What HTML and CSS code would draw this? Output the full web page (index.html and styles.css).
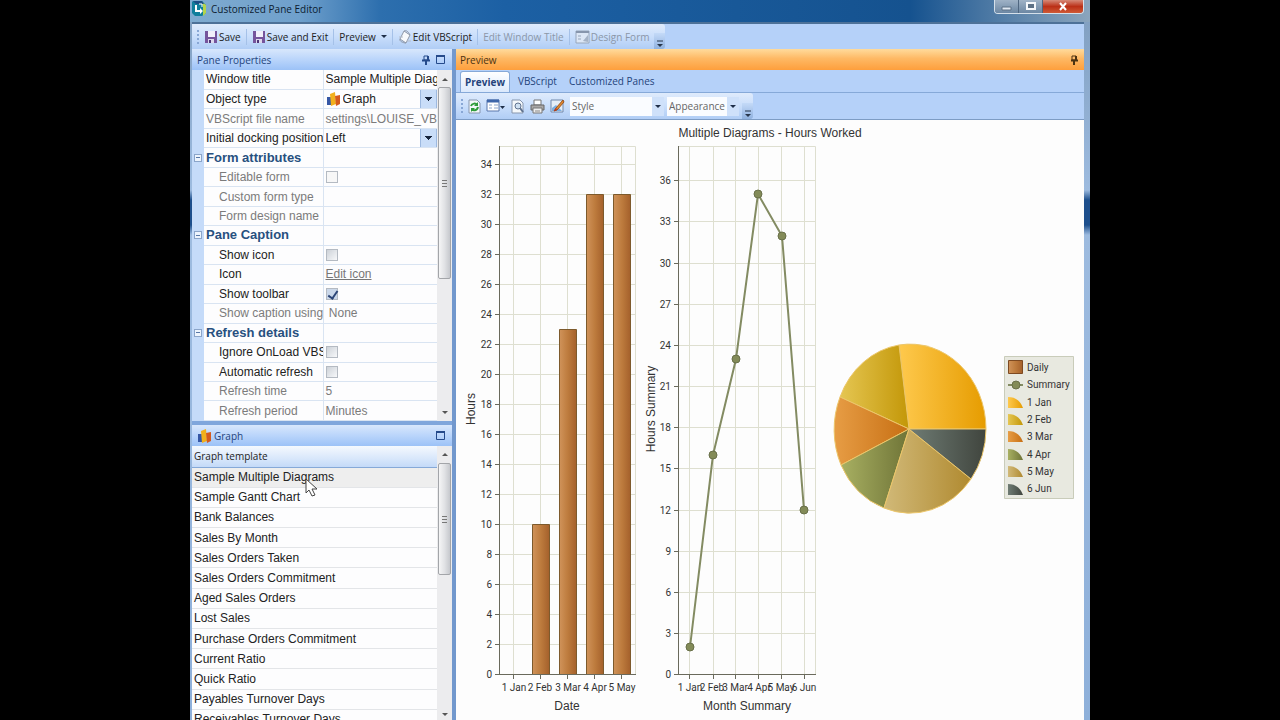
FILE: index.html
```html
<!DOCTYPE html>
<html lang="en">
<head>
    <meta charset="UTF-8">
    <meta name="viewport" content="width=device-width, initial-scale=1.0">
    <title>Customized Pane Editor</title>
    <link rel="stylesheet" href="styles.css">
</head>
<body>
<div class="window">
    <header class="titlebar">
        <svg class="app-icon" width="14" height="15" viewBox="0 0 14 15">
            <path d="M1 0h9l4 4v8l-4 3H3l-3-3V1z" fill="#0f7f9c"/>
            <path d="M9 0l5 4v8l-3 3V5z" fill="#b5d44a"/>
            <path d="M1 0h9l2 3H4z" fill="#1b4f86"/>
            <path d="M3 4h2v5h3V7l3 3-3 3v-2H3z" fill="#fff"/>
            <path d="M7 3h3v3" stroke="#fff" fill="none"/>
        </svg>
        <h1>Customized Pane Editor</h1>
        <div class="window-buttons">
            <button aria-label="Minimize"><svg width="12" height="10" viewBox="0 0 12 10"><path d="M1 5h9v3H1z" fill="#dfe8f2" stroke="#5d7186"/></svg></button>
            <button aria-label="Maximize"><svg width="12" height="10" viewBox="0 0 12 10"><path d="M2 1h8v6H2z" fill="#5d7186" stroke="#f4f7fb" stroke-width="2"/></svg></button>
            <button class="close" aria-label="Close"><svg width="12" height="10" viewBox="0 0 12 10"><path d="M3 1l6 7M9 1L3 8" stroke="#fff" stroke-width="2"/></svg></button>
        </div>
    </header>

    <div class="client">
        <div class="main-toolbar">
            <div class="strip">
                <span class="grip"></span>
                <button><svg width="14" height="14" viewBox="0 0 14 14"><path d="M1 1h12v12H1z" fill="#75549c"/><path d="M4 1h7v6H4z" fill="#f1effa"/><path d="M4 9h6v4H4z" fill="#ddd8ec"/><path d="M5 10h2v3H5z" fill="#4d3477"/></svg>Save</button>
                <span class="sep"></span>
                <button><svg width="14" height="14" viewBox="0 0 14 14"><path d="M1 1h12v12H1z" fill="#75549c"/><path d="M4 1h7v6H4z" fill="#f1effa"/><path d="M4 9h6v4H4z" fill="#ddd8ec"/><path d="M5 10h2v3H5z" fill="#4d3477"/></svg>Save and Exit</button>
                <span class="sep"></span>
                <button class="menu">Preview<span class="caret"></span></button>
                <span class="sep"></span>
                <button><svg width="14" height="14" viewBox="0 0 14 14"><path d="M6 1l6 4-4 8-6-4z" fill="#f7f9fc" stroke="#8d97a8"/><path d="M6 1c2-1 4 0 6 4M2 9c-1 2 3 4 6 4" fill="none" stroke="#8d97a8"/><path d="M1 7h4M9 11h4" stroke="#b6becb"/></svg>Edit VBScript</button>
                <span class="sep"></span>
                <button disabled>Edit Window Title</button>
                <span class="sep"></span>
                <button disabled><svg width="15" height="14" viewBox="0 0 15 14"><path d="M1 1h13v12H1z" fill="#dce7f6" stroke="#97a6bb"/><path d="M1 2h13" stroke="#8796ad" stroke-width="2"/><path d="M3 6h3M3 9h3" stroke="#97a6bb"/><path d="M13 5l-5 6 5 1z" fill="#a5b3c7"/></svg>Design Form</button>
                <button class="more" aria-label="Toolbar options"><svg width="7" height="8" viewBox="0 0 7 8"><path d="M1 1h6" stroke="#27364d"/><path d="M1 4h6L4 7z" fill="#27364d"/></svg></button>
            </div>
        </div>

        <div class="columns">
            <aside class="side">
                <section class="pane properties">
                    <h2 class="pane-head">Pane Properties
                        <span class="head-icons">
                            <svg width="9" height="10" viewBox="0 0 9 10"><path d="M2 1h4v4H2z" fill="none" stroke="#254a8b"/><path d="M6 1v4M0 5.500h8M4 6v4" fill="none" stroke="#254a8b" stroke-width="2"/></svg>
                            <svg width="9" height="9" viewBox="0 0 9 9"><path d="M.5.5h8v8h-8z" fill="none" stroke="#254a8b"/><path d="M0 1h9" stroke="#254a8b" stroke-width="2"/></svg>
                        </span>
                    </h2>
                    <div class="pane-body">
                        <table class="props">
                            <tr><td class="gutter"></td><th><label for="p-title">Window title</label></th><td><input class="text" id="p-title" type="text" value="Sample Multiple Diagrams"></td></tr>
                            <tr><td class="gutter"></td><th><label for="p-type">Object type</label></th><td>
                                <span class="drop"><svg width="15" height="14" viewBox="0 0 15 14"><path d="M1 5h4v8H1z" fill="#3657a5"/><path d="M4 2l5-2 1 12-5 2z" fill="#f2b01c"/><path d="M9 4l5-1v9l-4 2z" fill="#d55a1c"/></svg><select id="p-type"><option>Graph</option></select></span></td></tr>
                            <tr class="off"><td class="gutter"></td><th>VBScript file name</th><td>settings\LOUISE_VBScript</td></tr>
                            <tr><td class="gutter"></td><th><label for="p-dock">Initial docking position</label></th><td><span class="drop"><select id="p-dock"><option>Left</option></select></span></td></tr>
                            <tr class="group"><td class="gutter"><button class="fold" aria-label="Collapse Form attributes"></button></td><th>Form attributes</th><td></td></tr>
                            <tr class="sub off"><td class="gutter"></td><th><label for="p-edit">Editable form</label></th><td><input id="p-edit" type="checkbox" disabled></td></tr>
                            <tr class="sub off"><td class="gutter"></td><th>Custom form type</th><td></td></tr>
                            <tr class="sub off"><td class="gutter"></td><th>Form design name</th><td></td></tr>
                            <tr class="group"><td class="gutter"><button class="fold" aria-label="Collapse Pane Caption"></button></td><th>Pane Caption</th><td></td></tr>
                            <tr class="sub"><td class="gutter"></td><th><label for="p-icon">Show icon</label></th><td><input id="p-icon" type="checkbox"></td></tr>
                            <tr class="sub"><td class="gutter"></td><th>Icon</th><td><a href="#">Edit icon</a></td></tr>
                            <tr class="sub"><td class="gutter"></td><th><label for="p-bar">Show toolbar</label></th><td><input id="p-bar" type="checkbox" checked></td></tr>
                            <tr class="sub off"><td class="gutter"></td><th>Show caption using</th><td>&nbsp;None</td></tr>
                            <tr class="group"><td class="gutter"><button class="fold" aria-label="Collapse Refresh details"></button></td><th>Refresh details</th><td></td></tr>
                            <tr class="sub"><td class="gutter"></td><th><label for="p-load">Ignore OnLoad VBScript</label></th><td><input id="p-load" type="checkbox"></td></tr>
                            <tr class="sub"><td class="gutter"></td><th><label for="p-auto">Automatic refresh</label></th><td><input id="p-auto" type="checkbox"></td></tr>
                            <tr class="sub off"><td class="gutter"></td><th>Refresh time</th><td>5</td></tr>
                            <tr class="sub off"><td class="gutter"></td><th>Refresh period</th><td>Minutes</td></tr>
                        </table>
                        <div class="scroll"><span class="up"></span><span class="thumb"></span><span class="down"></span></div>
                    </div>
                </section>

                <section class="pane graphs">
                    <h2 class="pane-head"><svg width="15" height="14" viewBox="0 0 15 14"><path d="M1 5h4v8H1z" fill="#3657a5"/><path d="M4 2l5-2 1 12-5 2z" fill="#f2b01c"/><path d="M9 4l5-1v9l-4 2z" fill="#d55a1c"/></svg>Graph
                        <span class="head-icons">
                            <svg width="9" height="9" viewBox="0 0 9 9"><path d="M.5.5h8v8h-8z" fill="none" stroke="#254a8b"/><path d="M0 1h9" stroke="#254a8b" stroke-width="2"/></svg>
                        </span>
                    </h2>
                    <div class="pane-body">
                        <div class="list-wrap">
                            <table class="list">
                                <thead><tr><th>Graph template</th></tr></thead>
                                <tbody>
                                <tr class="current"><td>Sample Multiple Diagrams</td></tr>
                                <tr><td>Sample Gantt Chart</td></tr>
                                <tr><td>Bank Balances</td></tr>
                                <tr><td>Sales By Month</td></tr>
                                <tr><td>Sales Orders Taken</td></tr>
                                <tr><td>Sales Orders Commitment</td></tr>
                                <tr><td>Aged Sales Orders</td></tr>
                                <tr><td>Lost Sales</td></tr>
                                <tr><td>Purchase Orders Commitment</td></tr>
                                <tr><td>Current Ratio</td></tr>
                                <tr><td>Quick Ratio</td></tr>
                                <tr><td>Payables Turnover Days</td></tr>
                                <tr><td>Receivables Turnover Days</td></tr>
                                </tbody>
                            </table>
                            <svg class="pointer" width="13" height="19" viewBox="0 0 13 19"><path d="M1 1v14l3-3 3 6 3-1-3-6h5z" fill="#fff" stroke="#444"/></svg>
                        </div>
                        <div class="scroll"><span class="up"></span><span class="thumb"></span><span class="down"></span></div>
                    </div>
                </section>
            </aside>

            <main class="preview">
                <h2 class="preview-head">Preview
                    <svg width="9" height="10" viewBox="0 0 9 10"><path d="M2 1h4v4H2z" fill="none" stroke="#4c3312"/><path d="M6 1v4M1 5.500h7M4 6v4" fill="none" stroke="#4c3312" stroke-width="2"/></svg>
                </h2>
                <nav class="tabs">
                    <a href="#" class="active">Preview</a>
                    <a href="#">VBScript</a>
                    <a href="#">Customized Panes</a>
                </nav>
                <div class="preview-toolbar">
                    <div class="strip">
                        <span class="grip"></span>
                        <button aria-label="Refresh"><svg width="13" height="15" viewBox="0 0 13 15"><path d="M1 1h8l3 3v10H1z" fill="#f4f8fb" stroke="#8796ad"/><path d="M3 7c1-3 5-3 6-1M10 8c-1 4-5 4-6 2" fill="none" stroke="#2f9b3a" stroke-width="2"/><path d="M10 3v4H6zM3 13V9h4z" fill="#2f9b3a"/></svg></button>
                        <button aria-label="Layout"><svg width="20" height="14" viewBox="0 0 20 14"><path d="M1 1h12v11H1z" fill="#fff" stroke="#5877ac"/><path d="M1 2h12" stroke="#3e66aa" stroke-width="3"/><path d="M3 6h3M3 9h3M8 6h4M8 9h4" stroke="#8ba4cc"/><path d="M14 7h5l-2.500 3z" fill="#1f2f49"/></svg></button>
                        <button aria-label="Print preview"><svg width="14" height="15" viewBox="0 0 14 15"><path d="M1 1h8l3 3v10H1z" fill="#f4f8fb" stroke="#8796ad"/><circle cx="7" cy="7" r="3" fill="#cfe1f2" stroke="#60738f"/><path d="M9 9l3 4" stroke="#60738f" stroke-width="2"/></svg></button>
                        <button aria-label="Print"><svg width="15" height="15" viewBox="0 0 15 15"><path d="M4 1h7v5H4z" fill="#fff" stroke="#777"/><path d="M1 6h13v5H1z" fill="#a9a7a6" stroke="#666"/><path d="M3 9h9v5H3z" fill="#eee" stroke="#777"/><path d="M5 12h5" stroke="#888"/></svg></button>
                        <button aria-label="Edit"><svg width="15" height="14" viewBox="0 0 15 14"><path d="M1 1h12v12H1z" fill="#e4edf7" stroke="#7188ab"/><path d="M2 9l4-3 6 6H2z" fill="#79aee2"/><path d="M13 1L6 9l-2 3 3-1 7-8z" fill="#e28a2c" stroke="#9b5423"/><path d="M6 9l-2 3 3-1z" fill="#c62d20"/></svg></button>
                        <span class="combo style"><select aria-label="Style"><option>Style</option></select></span>
                        <span class="combo appearance"><select aria-label="Appearance"><option>Appearance</option></select></span>
                        <button class="more" aria-label="Toolbar options"><svg width="7" height="8" viewBox="0 0 7 8"><path d="M1 1h6" stroke="#27364d"/><path d="M1 4h6L4 7z" fill="#27364d"/></svg></button>
                    </div>
                </div>
                <div class="chart-area">
                    <svg class="chart" viewBox="456 120 628 600" role="img" aria-label="Multiple Diagrams - Hours Worked">
                        <defs>
                            <linearGradient id="bar"><stop offset="0" stop-color="#d0935a"/><stop offset=".5" stop-color="#bd7b3d"/><stop offset="1" stop-color="#a4602b"/></linearGradient>
                            <linearGradient id="jan"><stop offset="0" stop-color="#fec94d"/><stop offset="1" stop-color="#e69c00"/></linearGradient>
                            <linearGradient id="feb"><stop offset="0" stop-color="#e5c652"/><stop offset="1" stop-color="#c39708"/></linearGradient>
                            <linearGradient id="mar"><stop offset="0" stop-color="#e79d45"/><stop offset="1" stop-color="#c76f13"/></linearGradient>
                            <linearGradient id="apr"><stop offset="0" stop-color="#a8b062"/><stop offset="1" stop-color="#6f7437"/></linearGradient>
                            <linearGradient id="may"><stop offset="0" stop-color="#d1b978"/><stop offset="1" stop-color="#b08a30"/></linearGradient>
                            <linearGradient id="jun"><stop offset="0" stop-color="#6f7c74"/><stop offset="1" stop-color="#40453e"/></linearGradient>
                        </defs>

                        <text class="title" x="770" y="137">Multiple Diagrams - Hours Worked</text>

                        <!-- daily hours -->
                        <path class="grid" d="M499 164.500h137M499 194.500h137M499 224.500h137M499 254.500h137M499 284.500h137M499 314.500h137M499 344.500h137M499 374.500h137M499 404.500h137M499 434.500h137M499 464.500h137M499 494.500h137M499 524.500h137M499 554.500h137M499 584.500h137M499 614.500h137M499 644.500h137M513.500 146v528M540.500 146v528M567.500 146v528M594.500 146v528M621.500 146v528M499.500 146.500h136v528"/>
                        <g fill="url(#bar)" stroke="#7d5a2c">
                            <path d="M532.500 524.500h17v150h-17z"/>
                            <path d="M559.500 329.500h17v345h-17z"/>
                            <path d="M586.500 194.500h17v480h-17z"/>
                            <path d="M613.500 194.500h17v480h-17z"/>
                        </g>
                        <path class="axis" d="M499.500 146v529M495 674.500h141M495 164.500h5M495 194.500h5M495 224.500h5M495 254.500h5M495 284.500h5M495 314.500h5M495 344.500h5M495 374.500h5M495 404.500h5M495 434.500h5M495 464.500h5M495 494.500h5M495 524.500h5M495 554.500h5M495 584.500h5M495 614.500h5M495 644.500h5M513.500 674v5M540.500 674v5M567.500 674v5M594.500 674v5M621.500 674v5"/>
                        <g class="ticks">
                            <text x="492" y="168">34</text><text x="492" y="198">32</text><text x="492" y="228">30</text>
                            <text x="492" y="258">28</text><text x="492" y="288">26</text><text x="492" y="318">24</text>
                            <text x="492" y="348">22</text><text x="492" y="378">20</text><text x="492" y="408">18</text>
                            <text x="492" y="438">16</text><text x="492" y="468">14</text><text x="492" y="498">12</text>
                            <text x="492" y="528">10</text><text x="492" y="558">8</text><text x="492" y="588">6</text>
                            <text x="492" y="618">4</text><text x="492" y="648">2</text><text x="492" y="678">0</text>
                        </g>
                        <g class="names">
                            <text x="514" y="691">1 Jan</text><text x="540" y="691">2 Feb</text><text x="568" y="691">3 Mar</text>
                            <text x="595" y="691">4 Apr</text><text x="622" y="691">5 May</text>
                        </g>
                        <text class="title" x="567" y="710">Date</text>
                        <text class="title" transform="translate(475 409) rotate(-90)">Hours</text>

                        <!-- monthly summary -->
                        <path class="grid" d="M678 180.500h138M678 221.500h138M678 263.500h138M678 304.500h138M678 345.500h138M678 386.500h138M678 427.500h138M678 468.500h138M678 510.500h138M678 551.500h138M678 592.500h138M678 633.500h138M689.500 146v528M713.500 146v528M735.500 146v528M758.500 146v528M781.500 146v528M804.500 146v528M678.500 146.500h137v528"/>
                        <path class="axis" d="M678.500 146v529M674 674.500h142M674 180.500h5M674 221.500h5M674 263.500h5M674 304.500h5M674 345.500h5M674 386.500h5M674 427.500h5M674 468.500h5M674 510.500h5M674 551.500h5M674 592.500h5M674 633.500h5M689.500 674v5M713.500 674v5M735.500 674v5M758.500 674v5M781.500 674v5M804.500 674v5"/>
                        <path d="M690 647L713 455L736 359L758 194L782 236L804 510" fill="none" stroke="#838b62" stroke-width="2"/>
                        <g fill="#838b58" stroke="#69704a">
                            <circle cx="690" cy="647" r="4"/><circle cx="713" cy="455" r="4"/><circle cx="736" cy="359" r="4"/>
                            <circle cx="758" cy="194" r="4"/><circle cx="782" cy="236" r="4"/><circle cx="804" cy="510" r="4"/>
                        </g>
                        <g class="ticks">
                            <text x="671" y="184">36</text><text x="671" y="225">33</text><text x="671" y="267">30</text>
                            <text x="671" y="308">27</text><text x="671" y="349">24</text><text x="671" y="390">21</text>
                            <text x="671" y="431">18</text><text x="671" y="472">15</text><text x="671" y="514">12</text>
                            <text x="671" y="555">9</text><text x="671" y="596">6</text><text x="671" y="637">3</text>
                            <text x="671" y="678">0</text>
                        </g>
                        <g class="names">
                            <text x="690" y="691">1 Jan</text><text x="712" y="691">2 Feb</text><text x="735" y="691">3 Mar</text>
                            <text x="759" y="691">4 Apr</text><text x="781" y="691">5 May</text><text x="804" y="691">6 Jun</text>
                        </g>
                        <text class="title" x="747" y="710">Month Summary</text>
                        <text class="title" transform="translate(655 409) rotate(-90)">Hours Summary</text>

                        <!-- pie -->
                        <g stroke="#ecc66a" stroke-linejoin="round">
                            <path d="M909 429L899 345A76 85 0 0 1 986 429z" fill="url(#jan)"/>
                            <path d="M909 429L840 397A76 85 0 0 1 899 345z" fill="url(#feb)"/>
                            <path d="M909 429L841 465A76 85 0 0 1 840 397z" fill="url(#mar)"/>
                            <path d="M909 429L884 508A76 85 0 0 1 841 465z" fill="url(#apr)"/>
                            <path d="M909 429L971 479A76 85 0 0 1 884 508z" fill="url(#may)"/>
                            <path d="M909 429L986 429A76 85 0 0 1 971 479z" fill="url(#jun)"/>
                        </g>

                        <!-- legend -->
                        <path d="M1004.500 356.500h69v142h-69z" fill="#e8e9e0" stroke="#c9ccba"/>
                        <path d="M1008.500 360.500h14v13h-14z" fill="url(#bar)" stroke="#7d4a22"/>
                        <path d="M1008 385h15" stroke="#838b62" stroke-width="2"/>
                        <circle cx="1016" cy="385" r="4" fill="#838b58" stroke="#69704a"/>
                        <path d="M1008 397q11 0 15 11h-15z" fill="url(#jan)"/>
                        <path d="M1008 414q11 0 15 11h-15z" fill="url(#feb)"/>
                        <path d="M1008 431q11 0 15 11h-15z" fill="url(#mar)"/>
                        <path d="M1008 449q11 0 15 11h-15z" fill="url(#apr)"/>
                        <path d="M1008 466q11 0 15 11h-15z" fill="url(#may)"/>
                        <path d="M1008 484q11 0 15 11h-15z" fill="url(#jun)"/>
                        <g>
                            <text x="1027" y="371">Daily</text><text x="1027" y="388">Summary</text>
                            <text x="1027" y="406">1 Jan</text><text x="1027" y="423">2 Feb</text>
                            <text x="1027" y="440">3 Mar</text><text x="1027" y="458">4 Apr</text>
                            <text x="1027" y="475">5 May</text><text x="1027" y="492">6 Jun</text>
                        </g>
                    </svg>
                </div>
            </main>
        </div>
    </div>
</div>
</body>
</html>
```

FILE: styles.css
```css
* {
    box-sizing: border-box;
}
body {
    margin: 0;
    padding: 0 190px;
    height: 100vh;
    overflow: hidden;
    background: #000;
    color: #222;
    font-family: "Open Sans", "Liberation Sans", sans-serif;
    font-size: 10px;
}
h1, h2 {
    margin: 0;
    font-size: 10px;
    font-weight: normal;
}
button {
    border: 0;
    padding: 0;
    background: none;
    font: inherit;
    color: inherit;
}
svg {
    flex: none;
}

.window {
    display: flex;
    flex-direction: column;
    height: 100%;
    background: linear-gradient(#7f9dbe, #9dbbdf 190px, #1d4f8c 200px, #1d4f8c 225px, #9dbbdf 235px, #8eb0da);
}
.titlebar {
    display: flex;
    align-items: flex-start;
    gap: 5px;
    height: 22px;
    padding: 1px 6px 0 2px;
    background: linear-gradient(90deg, #7fabd0, #6fa0cc 110px, #2d6fae 190px, #1c60a4 35%, #15528f 80%, #4775a2 88%, #8ba5bd);
}
h1 {
    flex: 1;
    line-height: 16px;
    color: #0c1c30;
}
.window-buttons {
    display: flex;
    margin-top: -1px;
    border: 1px solid #d5e0ea;
    border-top: 0;
    border-radius: 0 0 4px 4px;
    overflow: hidden;
}
.window-buttons button {
    width: 24px;
    height: 13px;
    line-height: 8px;
    border-right: 1px solid #4f6680;
    background: linear-gradient(#9fb2c6, #6c87a3);
}
.window-buttons .close {
    width: 40px;
    border: 0;
    background: linear-gradient(#d68a78, #bb3017 50%, #cf5a36);
}

.client {
    flex: 1;
    min-height: 0;
    display: flex;
    flex-direction: column;
    margin: 0 6px 0 2px;
    border-top: 2px solid #4d7198;
    background: #b5d1f9;
}
.strip {
    display: flex;
    align-items: center;
    width: max-content;
    height: 100%;
    background: linear-gradient(#dfebfc, #c9defb 50%, #b0cdf5);
    border-radius: 0 3px 3px 0;
}
.strip button {
    display: flex;
    align-items: center;
    gap: 1px;
}
.strip button:disabled {
    color: #8b97a8;
}
.strip .more {
    align-self: flex-end;
    height: 16px;
    margin-left: 5px;
    padding: 5px 2px 0 2px;
    background: linear-gradient(#c4daf8, #8fb1df);
    border-radius: 0 0 3px 0;
}
.grip {
    width: 2px;
    height: 14px;
    margin: 0 5px;
    background: repeating-linear-gradient(#88a7d5 0 2px, transparent 2px 4px);
}
.sep {
    width: 1px;
    height: 16px;
    margin: 0 5px;
    background: #a5c1e8;
}
.main-toolbar {
    height: 25px;
}
.main-toolbar .menu {
    gap: 5px;
}
.caret {
    border: 3px solid transparent;
    border-top-color: #1f2f49;
    border-bottom: 0;
}

.columns {
    flex: 1;
    min-height: 0;
    display: flex;
}
.side {
    flex: 0 0 264px;
    display: flex;
    flex-direction: column;
    gap: 4px;
    border-right: 4px solid #7298cd;
    background: #7fa6dc;
}
.pane {
    display: flex;
    flex-direction: column;
}
.graphs {
    flex: 1;
    min-height: 0;
}
.pane-head {
    display: flex;
    align-items: center;
    gap: 2px;
    height: 21px;
    padding: 0 7px 0 5px;
    color: #24447c;
    background: linear-gradient(#d8e7fc, #bad5fb 50%, #9cc2f7);
}
.head-icons {
    display: flex;
    gap: 5px;
    margin-left: auto;
}
.pane-body {
    flex: 1;
    min-height: 0;
    display: flex;
    background: #fdfdfe;
}
table {
    width: 100%;
    table-layout: fixed;
    border-collapse: collapse;
    font-family: "Liberation Sans", Arial, sans-serif;
    font-size: 12px;
}
.props {
    height: 351px;
}
.props th, .props td {
    height: 19px;
    padding: 0 0 0 2px;
    overflow: hidden;
    white-space: nowrap;
    text-align: left;
    font-weight: normal;
    line-height: 16px;
    border-bottom: 1px solid #d9e4f2;
}
.props th {
    width: 119px;
    border-right: 1px solid #d9e4f2;
}
.props .gutter {
    width: 12px;
    background: #c5dbf9;
    border-color: #c5dbf9;
}
.props .sub th {
    padding-left: 15px;
}
.props .off {
    color: #7b7b7b;
}
.props .group th {
    font-weight: bold;
    font-size: 13px;
    color: #27507f;
}
.props a {
    color: #777;
}
.fold {
    display: block;
    width: 8px;
    height: 8px;
    border: 1px solid #8ba5ca;
    background: linear-gradient(#5878a8, #5878a8) center / 4px 1px no-repeat #edf4fd;
}
.text {
    display: block;
    width: 100%;
    height: 16px;
    border: 0;
    padding: 0;
    background: none;
    font: inherit;
    color: inherit;
}
.drop {
    display: flex;
    align-items: center;
    gap: 2px;
    height: 18px;
}
select {
    flex: 1;
    min-width: 0;
    appearance: none;
    border: 0;
    padding: 0;
    background: none;
    font: inherit;
    color: inherit;
}
.drop::after {
    content: "";
    width: 15px;
    height: 18px;
    border: 1px solid #9db9e0;
    background: conic-gradient(from -45deg at 50% 100%, #16243c 90deg, transparent 0) center / 7px 4px no-repeat #c9ddf8;
}
input[type="checkbox"] {
    display: block;
    appearance: none;
    width: 12px;
    height: 12px;
    margin: 0;
    border: 1px solid #b4bac2;
    background: linear-gradient(135deg, #cdd2d8, #f7f8fa);
}
input[type="checkbox"]:disabled {
    background: #f7f7f7;
}
input[type="checkbox"]:checked {
    background: #cbd8ea;
}
input[type="checkbox"]:checked::after {
    content: "";
    display: block;
    width: 4px;
    height: 8px;
    margin: 0 0 0 3px;
    border: solid #2c4576;
    border-width: 0 2px 2px 0;
    transform: rotate(35deg);
}

.scroll {
    flex: 0 0 15px;
    display: flex;
    flex-direction: column;
    align-items: center;
    padding: 8px 1px 7px;
    background: #ececee;
}
.up, .down {
    border: 3px solid transparent;
}
.up {
    border-bottom-color: #555;
    border-top: 0;
}
.down {
    margin-top: auto;
    border-top-color: #555;
    border-bottom: 0;
}
.thumb {
    width: 13px;
    height: 192px;
    margin-top: 6px;
    border: 1px solid #a3a5a9;
    border-radius: 2px;
    background:
        repeating-linear-gradient(#777 0 1px, transparent 1px 3px) center / 5px 7px no-repeat,
        linear-gradient(90deg, #f5f5f6, #e1e2e5 50%, #c6c8cd);
}
.graphs .scroll {
    padding-top: 7px;
    padding-bottom: 4px;
}
.graphs .thumb {
    height: 112px;
    margin-top: 7px;
}

.list-wrap {
    flex: 1;
    min-width: 0;
    position: relative;
    overflow: hidden;
}
.list {
    height: 284px;
}
.list th {
    height: 21px;
    padding: 0 2px;
    text-align: left;
    font-family: "Open Sans", sans-serif;
    font-size: 10px;
    font-weight: normal;
    background: linear-gradient(#f5f9fe, #d8e7fb 60%, #c4daf8);
    border-bottom: 1px solid #86a9d8;
}
.list td {
    padding: 0 2px;
    white-space: nowrap;
    border-bottom: 1px solid #e3e5e8;
}
.current {
    background: #eeeeee;
}
.pointer {
    position: absolute;
    left: 113px;
    top: 32px;
}

.preview {
    flex: 1;
    min-width: 0;
    display: flex;
    flex-direction: column;
}
.preview-head {
    display: flex;
    align-items: center;
    justify-content: space-between;
    height: 21px;
    padding: 0 5px 0 4px;
    color: #4c3312;
    background: linear-gradient(#ffdb9c, #feb965 45%, #fe9f3c);
}
.tabs {
    display: flex;
    align-items: flex-end;
    height: 23px;
    padding: 0 4px;
    border-bottom: 1px solid #86a9d8;
}
.tabs a {
    padding: 0 6px;
    line-height: 21px;
    color: #24447c;
    text-decoration: none;
}
.tabs .active {
    padding: 0 4px;
    margin-right: 2px;
    font-weight: bold;
    background: linear-gradient(#fff, #dbe9fc);
    border: 1px solid #86a9d8;
    border-bottom: 0;
    border-radius: 3px 3px 0 0;
    line-height: 20px;
}
.preview-toolbar {
    height: 27px;
    border-bottom: 1px solid #7d9cc4;
}
.preview-toolbar .strip > button {
    margin-right: 5px;
}
.preview-toolbar .strip > .more {
    margin: 0;
}
.combo {
    display: flex;
    align-items: center;
    height: 19px;
    margin-right: 3px;
    padding: 0 3px 0 2px;
    color: #666;
    background: linear-gradient(90deg, #fafcff calc(100% - 12px), #cfe1fa 0);
}
.combo::after {
    content: "";
    border: 3px solid transparent;
    border-top-color: #1f2f49;
    border-bottom: 0;
}
.style {
    width: 94px;
}
.appearance {
    width: 72px;
}

.chart-area {
    flex: 1;
    min-height: 0;
    background: #fdfdfd;
}
.chart {
    display: block;
    width: 100%;
    height: 100%;
}
.grid {
    fill: none;
    stroke: #dedfd0;
}
.axis {
    fill: none;
    stroke: #6a6a5c;
}
.chart text {
    fill: #333;
    font-family: Roboto, sans-serif;
    font-size: 10px;
}
.chart .title {
    font-family: "Liberation Sans", Arial, sans-serif;
    font-size: 12px;
    text-anchor: middle;
}
.ticks {
    text-anchor: end;
}
.names {
    text-anchor: middle;
}
```
